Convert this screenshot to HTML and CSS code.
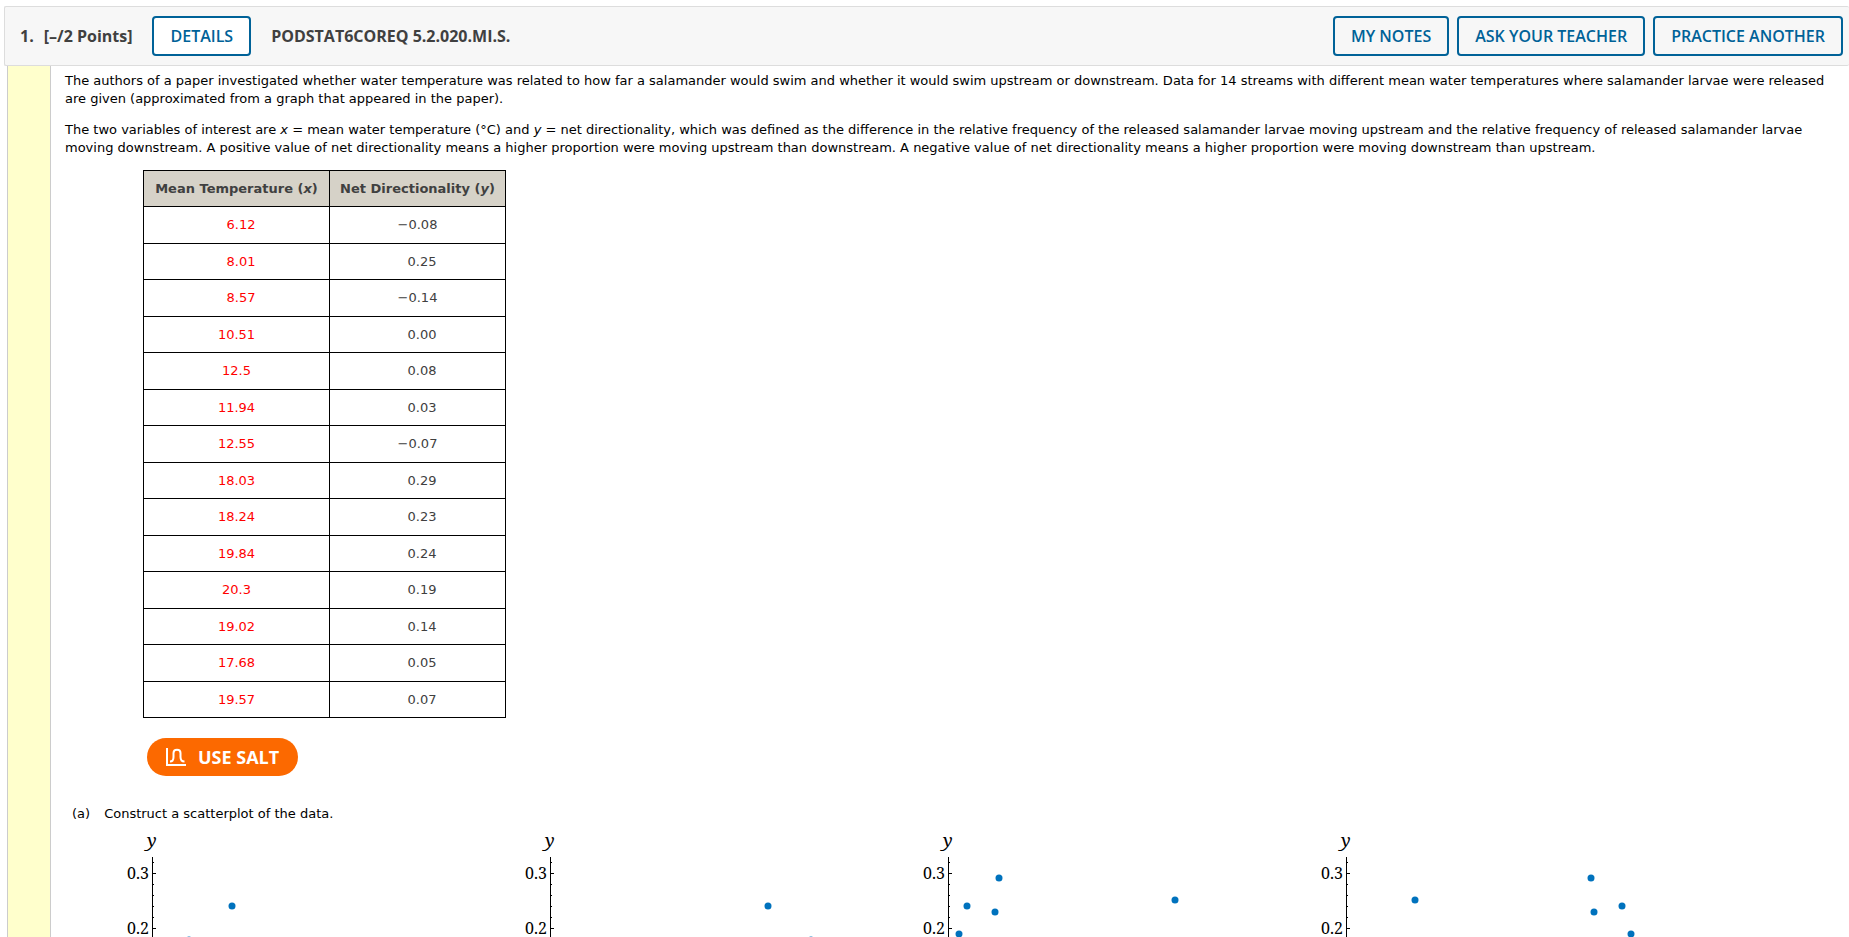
FILE: index.html
```html
<!DOCTYPE html>
<html lang="en">
<head>
  <meta charset="UTF-8">
  <title>PODSTAT6COREQ 5.2.020.MI.S.</title>
  <link rel="stylesheet" href="styles.css">
</head>
<body>
  <header class="question-header">
    <span class="number">1.</span>
    <span class="points">[–/2 Points]</span>
    <button class="btn details">DETAILS</button>
    <span class="question-name">PODSTAT6COREQ 5.2.020.MI.S.</span>
    <div class="actions">
      <button class="btn">MY NOTES</button>
      <button class="btn">ASK YOUR TEACHER</button>
      <button class="btn">PRACTICE ANOTHER</button>
    </div>
  </header>

  <main class="question">
    <div class="content">
      <p>The authors of a paper investigated whether water temperature was related to how far a salamander would swim and whether it would swim upstream or downstream. Data for 14 streams with different mean water temperatures where salamander larvae were released are given (approximated from a graph that appeared in the paper).</p>
      <p>The two variables of interest are <i>x</i> = mean water temperature (°C) and <i>y</i> = net directionality, which was defined as the difference in the relative frequency of the released salamander larvae moving upstream and the relative frequency of released salamander larvae moving downstream. A positive value of net directionality means a higher proportion were moving upstream than downstream. A negative value of net directionality means a higher proportion were moving downstream than upstream.</p>

      <table class="data">
        <thead>
          <tr><th class="col-x">Mean Temperature (<i>x</i>)</th><th class="col-y">Net Directionality (<i>y</i>)</th></tr>
        </thead>
        <tbody>
          <tr><td class="rand short">6.12</td><td>−0.08</td></tr>
          <tr><td class="rand short">8.01</td><td class="short">0.25</td></tr>
          <tr><td class="rand short">8.57</td><td>−0.14</td></tr>
          <tr><td class="rand">10.51</td><td class="short">0.00</td></tr>
          <tr><td class="rand">12.5</td><td class="short">0.08</td></tr>
          <tr><td class="rand">11.94</td><td class="short">0.03</td></tr>
          <tr><td class="rand">12.55</td><td>−0.07</td></tr>
          <tr><td class="rand">18.03</td><td class="short">0.29</td></tr>
          <tr><td class="rand">18.24</td><td class="short">0.23</td></tr>
          <tr><td class="rand">19.84</td><td class="short">0.24</td></tr>
          <tr><td class="rand">20.3</td><td class="short">0.19</td></tr>
          <tr><td class="rand">19.02</td><td class="short">0.14</td></tr>
          <tr><td class="rand">17.68</td><td class="short">0.05</td></tr>
          <tr><td class="rand">19.57</td><td class="short">0.07</td></tr>
        </tbody>
      </table>

      <button class="salt">
        <svg width="20" height="18" viewBox="0 0 20 18" fill="none" stroke="#fff" stroke-width="2">
          <path d="M1 0V17H20"/>
          <path d="M4 13.500C6.500 13.500 7.500 12 7.500 9V5C7.500 0.500 14.500 0.500 14.500 5V9C14.500 12 15.500 13.500 18.500 13.500"/>
        </svg>
        USE SALT
      </button>

      <div class="part">
        <span class="part-label">(a)</span>
        <div class="part-body">
          <div>Construct a scatterplot of the data.</div>
          <div class="plots" id="plots"></div>
        </div>
      </div>
    </div>
  </main>

  <script>
    // dots of each answer choice, in plot coordinates
    const plots = [
      [[128, 73], [85, 107]],
      [[266, 73], [309, 107]],
      [[99, 45], [67, 73], [95, 79], [59, 101], [275, 67]],
      [[117, 67], [293, 45], [296, 79], [324, 73], [333, 101]]
    ];

    function drawPlot(dots) {
      let ticks = '';
      for (let i = -1; i < 6; i++) {
        const y = 40 + i * 11;
        const len = i % 5 === 0 ? 4 : 2;
        ticks += `<path d="M48 ${y}.5h${len}"/>`;
      }
      const circles = dots.map(d => `<circle cx="${d[0]}" cy="${d[1]}" r="3.500"/>`).join('');
      return `
        <svg class="plot" width="350" height="112" viewBox="0 -8 350 112">
          <text class="axis-name" x="43" y="14">y</text>
          <g class="axis"><path d="M48.500 24V104"/>${ticks}</g>
          <text class="tick-label" x="45" y="46">0.3</text>
          <text class="tick-label" x="45" y="101">0.2</text>
          <g class="dots">${circles}</g>
        </svg>`;
    }

    document.getElementById('plots').innerHTML = plots.map(drawPlot).join('');
  </script>
</body>
</html>
```
FILE: styles.css
```css
* {
  box-sizing: border-box;
}

body {
  margin: 0;
  padding: 6px 0 0 4px;
  background: #fff;
  color: #000;
  font-family: Verdana, "DejaVu Sans", sans-serif;
  font-size: 13px;
  line-height: 18px;
}

.question-header {
  display: flex;
  align-items: center;
  height: 60px;
  padding: 0 6px 0 15px;
  background: #f7f7f7;
  border: 1px solid #ddd;
  border-right: none;
  border-radius: 2px;
  color: #404040;
  font-family: "Open Sans", sans-serif;
  font-size: 16px;
  font-weight: 700;
}

.points {
  margin-left: 10px;
}

.btn {
  height: 40px;
  padding: 0 16px;
  border: 2px solid #006298;
  border-radius: 4px;
  background: #fff;
  color: #006298;
  font: 600 16px "Open Sans", sans-serif;
  cursor: pointer;
}

.details {
  margin: 0 20px;
}

.actions {
  display: flex;
  gap: 8px;
  margin-left: auto;
}

.actions .btn {
  background: #f7f7f7;
}

.question {
  margin-left: 3px;
  padding-left: 42px;
  border-left: 1px solid #ccc;
  background: #ffc;
}

.content {
  padding: 6px 10px 0 14px;
  border-left: 1px solid #ccc;
  background: #fff;
}

p {
  margin: 0 0 13px;
}

.data {
  margin: 0 0 20px 78px;
  border-collapse: collapse;
  color: #404040;
}

.data th,
.data td {
  height: 36px;
  padding: 0;
  border: 1px solid #000;
  text-align: center;
  white-space: nowrap;
}

.data tr:nth-child(odd) td {
  height: 37px;
}

.data th {
  background: #d6d2c8;
}

.col-x {
  width: 186px;
}

.col-y {
  width: 176px;
}

.data .rand {
  color: #f00;
}

/* keeps the decimal points lined up when a digit or the sign is missing */
.data .short {
  padding-left: 9px;
}

.salt {
  display: flex;
  align-items: center;
  gap: 12px;
  height: 38px;
  margin-left: 82px;
  padding: 0 19px;
  border: none;
  border-radius: 19px;
  background: #fc6900;
  color: #fff;
  font: 700 18px "Open Sans", sans-serif;
  cursor: pointer;
}

.part {
  display: flex;
  gap: 14px;
  margin-top: 29px;
  padding-left: 7px;
}

.plots {
  display: flex;
  gap: 48px;
  margin-top: 2px;
}

.plot {
  flex: none;
  font-family: "Noto Serif", "Liberation Serif", serif;
}

.axis {
  stroke: #000;
}

.axis-name {
  font-size: 18px;
  font-style: italic;
}

.tick-label {
  font-size: 16px;
  text-anchor: end;
}

.dots {
  fill: #0072bd;
}
```
